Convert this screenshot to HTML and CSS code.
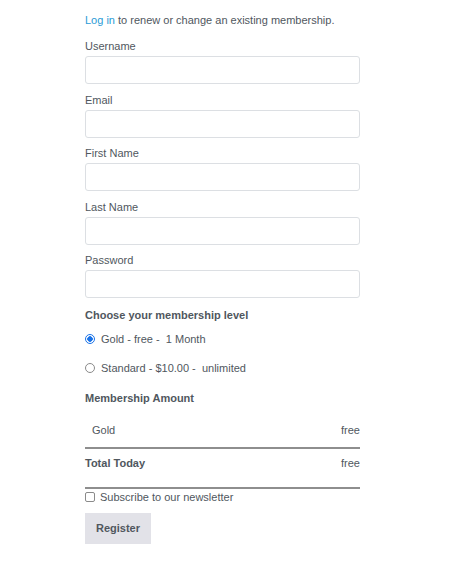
FILE: index.html
```html
<!DOCTYPE html>
<html lang="en">
<head>
<meta charset="utf-8">
<title>Membership Checkout</title>
<link rel="stylesheet" href="styles.css">
</head>
<body>
<form class="checkout">
  <p class="intro"><a href="#" class="link">Log in</a> to renew or change an existing membership.</p>

  <div class="field">
    <label class="label">Username</label>
    <input class="input" type="text">
  </div>
  <div class="field">
    <label class="label">Email</label>
    <input class="input" type="text">
  </div>
  <div class="field">
    <label class="label">First Name</label>
    <input class="input" type="text">
  </div>
  <div class="field">
    <label class="label">Last Name</label>
    <input class="input" type="text">
  </div>
  <div class="field">
    <label class="label">Password</label>
    <input class="input" type="password">
  </div>

  <h3 class="heading">Choose your membership level</h3>
  <label class="option"><input class="radio" type="radio" name="level" checked><span>Gold - free -&nbsp; 1 Month</span></label>
  <label class="option"><input class="radio" type="radio" name="level"><span>Standard - $10.00 -&nbsp; unlimited</span></label>

  <h3 class="heading heading-amount">Membership Amount</h3>
  <div class="amount-row">
    <span class="amount-name">Gold</span>
    <span>free</span>
  </div>
  <div class="total-row">
    <span class="total-name">Total Today</span>
    <span>free</span>
  </div>

  <label class="subscribe"><input class="check" type="checkbox"><span>Subscribe to our newsletter</span></label>

  <button type="button" class="button">Register</button>
</form>
</body>
</html>
```

FILE: styles.css
```css
html, body {
  margin: 0;
  padding: 0;
  background: #ffffff;
}

body {
  font-family: "Liberation Sans", Arial, Helvetica, sans-serif;
  font-size: 11px;
  color: #50575e;
}

.checkout {
  width: 275px;
  margin-left: 85px;
  padding-top: 12px;
}

.intro {
  margin: 0 0 10px;
  line-height: 16px;
  white-space: nowrap;
}

.link {
  color: #2a9bd6;
  text-decoration: none;
}

.field {
  display: flex;
  flex-direction: column;
  gap: 2px;
  margin-bottom: 7.5px;
}

.label {
  line-height: 16px;
}

.input {
  box-sizing: border-box;
  height: 28px;
  width: 100%;
  margin: 0;
  border: 1px solid #dcdfe3;
  border-radius: 3px;
  background: #fff;
  font: inherit;
}

.heading {
  margin: 0;
  font-size: 11px;
  font-weight: bold;
  line-height: 16px;
  padding-top: 1px;
}

.option {
  display: flex;
  align-items: center;
  height: 29px;
  line-height: 16px;
}

.option:first-of-type {
  margin-top: 2px;
}

.radio {
  appearance: none;
  -webkit-appearance: none;
  box-sizing: border-box;
  width: 10px;
  height: 10px;
  margin: 0 6px 0 0;
  border: 1px solid #8a8a8a;
  border-radius: 50%;
  background: #fff;
}

.radio:checked {
  border: 1px solid #1a73e8;
  background: radial-gradient(circle, #1a73e8 0 2.5px, #fff 3px);
}

.heading-amount {
  padding-top: 7px;
}

.amount-row,
.total-row {
  display: flex;
  justify-content: space-between;
  line-height: 16px;
  border-bottom: 2px solid #8e8e8e;
}

.amount-row {
  padding: 16px 0 9px 7px;
}

.total-row {
  padding: 6px 0 16px 0;
}

.total-name {
  font-weight: bold;
}

.subscribe {
  display: flex;
  align-items: center;
  line-height: 16px;
  margin-top: 0;
}

.check {
  appearance: none;
  -webkit-appearance: none;
  box-sizing: border-box;
  width: 10px;
  height: 10px;
  margin: 0 5px 0 0;
  border: 1px solid #8a8a8a;
  border-radius: 2px;
  background: #fff;
}

.button {
  display: block;
  margin-top: 8px;
  height: 31px;
  padding: 0 11px;
  border: none;
  border-radius: 0;
  background: #e2e2e8;
  color: #50575e;
  font-family: inherit;
  font-size: 11px;
  font-weight: bold;
}
```
